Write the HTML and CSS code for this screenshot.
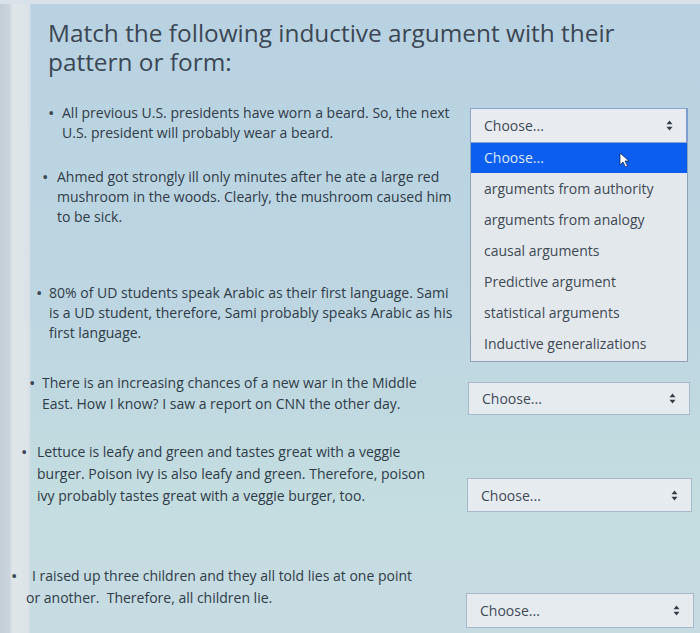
FILE: index.html
```html
<!DOCTYPE html>
<html lang="en">
<head>
<meta charset="utf-8">
<title>Match</title>
<link rel="stylesheet" href="styles.css">
</head>
<body>
<div class="screen">
  <div class="edge"></div>
  <div class="content">
    <h1 class="title">Match the following inductive argument with their pattern or form:</h1>
    <div class="rows">
      <div class="row r1">
        <div class="item"><span class="dot">•</span><span class="txt">All previous U.S. presidents have worn a beard. So, the next U.S. president will probably wear a beard.</span></div>
        <div class="selwrap">
          <div class="select focused"><span>Choose...</span><svg class="arrows" width="7" height="11" viewBox="0 0 7 11"><path d="M3.5 0.5 L6.5 4.2 L0.5 4.2 Z M0.5 6.8 L6.5 6.8 L3.5 10.5 Z" fill="#333c46"/></svg></div>
          <ul class="menu">
            <li class="hl">Choose...
              <svg class="cursor" width="11" height="16" viewBox="0 0 11 16"><path d="M1 1 L1 13 L4 10 L6.5 15 L8.5 14 L6 9 L10 9 Z" fill="#fff" stroke="#1a2a60" stroke-width="0.8"/></svg>
            </li>
            <li>arguments from authority</li>
            <li>arguments from analogy</li>
            <li>causal arguments</li>
            <li>Predictive argument</li>
            <li>statistical arguments</li>
            <li>Inductive generalizations</li>
          </ul>
        </div>
      </div>
      <div class="row r2">
        <div class="item"><span class="dot">•</span><span class="txt">Ahmed got strongly ill only minutes after he ate a large red mushroom in the woods. Clearly, the mushroom caused him to be sick.</span></div>
      </div>
      <div class="row r3">
        <div class="item"><span class="dot">•</span><span class="txt">80% of UD students speak Arabic as their first language. Sami is a UD student, therefore, Sami probably speaks Arabic as his first language.</span></div>
      </div>
      <div class="row r4">
        <div class="item"><span class="dot">•</span><span class="txt">There is an increasing chances of a new war in the Middle East. How I know? I saw a report on CNN the other day.</span></div>
        <div class="select s2"><span>Choose...</span><svg class="arrows" width="7" height="11" viewBox="0 0 7 11"><path d="M3.5 0.5 L6.5 4.2 L0.5 4.2 Z M0.5 6.8 L6.5 6.8 L3.5 10.5 Z" fill="#333c46"/></svg></div>
      </div>
      <div class="row r5">
        <div class="item"><span class="dot">•</span><span class="txt">Lettuce is leafy and green and tastes great with a veggie burger. Poison ivy is also leafy and green. Therefore, poison ivy probably tastes great with a veggie burger, too.</span></div>
        <div class="select s3"><span>Choose...</span><svg class="arrows" width="7" height="11" viewBox="0 0 7 11"><path d="M3.5 0.5 L6.5 4.2 L0.5 4.2 Z M0.5 6.8 L6.5 6.8 L3.5 10.5 Z" fill="#333c46"/></svg></div>
      </div>
      <div class="row r6">
        <div class="item"><span class="dot">•</span><span class="txt">I raised up three children and they all told lies at one point or another.&nbsp; Therefore, all children lie.</span></div>
        <div class="select s4"><span>Choose...</span><svg class="arrows" width="7" height="11" viewBox="0 0 7 11"><path d="M3.5 0.5 L6.5 4.2 L0.5 4.2 Z M0.5 6.8 L6.5 6.8 L3.5 10.5 Z" fill="#333c46"/></svg></div>
      </div>
    </div>
  </div>
</div>
</body>
</html>
```
FILE: styles.css
```css
* { box-sizing: border-box; }
html, body { margin: 0; padding: 0; }
body {
  width: 700px;
  height: 633px;
  overflow: hidden;
  font-family: "Open Sans", "Noto Sans", sans-serif;
  color: #34404c;
}
.screen {
  display: flex;
  width: 700px;
  height: 633px;
  background: linear-gradient(180deg, #b9d2e2 0%, #bdd6e1 50%, #c4dde0 80%, #c7dbe3 100%);
  border-top: 4px solid #d9e2e8;
}
.edge {
  width: 31px;
  flex: none;
  background: linear-gradient(90deg, #c3ced6 0%, #c9d4db 30%, #dfe6ea 40%, #dde4e9 90%, #cbd8e1 100%);
}
.content {
  flex: 1;
  padding-left: 16px;
}
.title {
  margin: 14px 0 0 1px;
  width: 620px;
  font-weight: 400;
  font-size: 24.4px;
  line-height: 29px;
  color: #3b4754;
}
.rows { margin-top: 27px; }
.row {
  display: flex;
  align-items: flex-start;
}
.item {
  display: flex;
  flex: none;
  font-size: 14px;
  line-height: 20px;
  color: #2f3b47;
}
.dot { flex: none; font-size: 17px; line-height: inherit; color: #3a4652; }
.txt { display: block; }

.r1 .item { margin-left: 1px; }
.r1 .dot { width: 14px; }
.r1 .txt { width: 396px; }

.r2 { margin-top: 24px; }
.r2 .item { margin-left: -5px; }
.r2 .dot { width: 15px; }
.r2 .txt { width: 402px; }

.r3 { margin-top: 56px; }
.r3 .item { margin-left: -11px; }
.r3 .dot { width: 13px; }
.r3 .txt { width: 410px; }

.r4 { margin-top: 29px; }
.r4 .item { margin-left: -18px; line-height: 21px; }
.r4 .dot { width: 13px; }
.r4 .txt { width: 402px; }

.r5 { margin-top: 26px; }
.r5 .item { margin-left: -26px; line-height: 22px; }
.r5 .dot { width: 16px; }
.r5 .txt { width: 400px; }

.r6 { margin-top: 53px; }
.r6 .item { margin-left: -36px; line-height: 21.5px; }
.r6 .dot { width: 15px; }
.r6 .txt { width: 398px; text-indent: 6px; }

.selwrap {
  position: relative;
  margin-left: auto;
  margin-right: 12px;
  margin-top: 5px;
  width: 218px;
  flex: none;
}
.select {
  display: flex;
  flex: none;
  justify-content: space-between;
  align-items: center;
  height: 34px;
  padding: 0 13px 0 13px;
  background: #e6ebf0;
  border: 1px solid #a7b9c8;
  font-size: 14px;
  color: #404a55;
}
.select.focused {
  height: 35px;
  border: 1px solid #8aa4cc;
  border-right: 2px solid #7f9dd0;
  background: #e8ecf1;
}
.arrows { display: block; flex: none; }
.menu {
  position: absolute;
  left: 0;
  top: 35px;
  width: 218px;
  margin: 0;
  padding: 0 0 2px 0;
  list-style: none;
  background: #e3e8ed;
  border: 1px solid #8ea3b6;
  border-top: none;
  font-size: 14px;
  color: #3e4853;
  z-index: 2;
}
.menu li {
  height: 31px;
  line-height: 31px;
  padding-left: 13px;
  white-space: nowrap;
}
.menu li.hl {
  position: relative;
  height: 30px;
  line-height: 30px;
  background: #0b5ef0;
  color: #dce7f6;
}
.cursor {
  position: absolute;
  left: 148px;
  top: 9px;
}
.s2 { width: 222px; margin-left: auto; margin-right: 10px; margin-top: 10px; height: 33px; }
.s3 { width: 225px; margin-left: auto; margin-right: 8px; margin-top: 37px; }
.s4 { width: 228px; margin-left: auto; margin-right: 6px; margin-top: 28px; height: 35px; }
```
